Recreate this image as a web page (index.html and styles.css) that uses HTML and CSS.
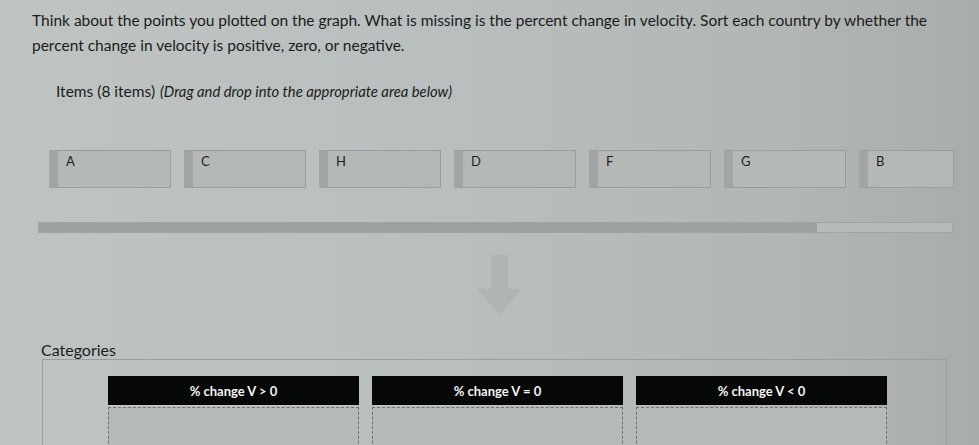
FILE: index.html
```html
<!DOCTYPE html>
<html>
<head>
<meta charset="utf-8">
<link rel="stylesheet" href="styles.css">
</head>
<body>
<div class="page">
  <p class="prompt">Think about the points you plotted on the graph. What is missing is the percent change in velocity. Sort each country by whether the percent change in velocity is positive, zero, or negative.</p>
  <div class="items-head"><span class="items-title">Items (8 items)</span> <span class="items-hint">(Drag and drop into the appropriate area below)</span></div>
  <div class="cards">
    <div class="card"><span>A</span></div>
    <div class="card"><span>C</span></div>
    <div class="card"><span>H</span></div>
    <div class="card"><span>D</span></div>
    <div class="card"><span>F</span></div>
    <div class="card"><span>G</span></div>
    <div class="card last"><span>B</span></div>
  </div>
  <div class="track"><div class="thumb"></div></div>
  <div class="arrow-wrap">
    <svg class="arrow" width="48" height="62" viewBox="0 0 48 62">
      <rect x="15" y="0" width="17" height="36" fill="#afb5b4"/>
      <polygon points="1,34 46,34 23.5,60" fill="#afb5b4"/>
    </svg>
  </div>
  <div class="cat-label">Categories</div>
  <div class="cat-box">
    <div class="cat-col">
      <div class="cat-head">% change V &gt; 0</div>
      <div class="cat-drop"></div>
    </div>
    <div class="cat-col">
      <div class="cat-head">% change V = 0</div>
      <div class="cat-drop"></div>
    </div>
    <div class="cat-col">
      <div class="cat-head">% change V &lt; 0</div>
      <div class="cat-drop"></div>
    </div>
  </div>
</div>
</body>
</html>
```

FILE: styles.css
```css
html, body {
  margin: 0;
  padding: 0;
  height: 100%;
  overflow: hidden;
}
body {
  background: linear-gradient(90deg, #bfc4c3 0%, #b9bfbe 45%, #b2b7b5 80%, #a8acaa 100%);
  font-family: Lato, "Open Sans", sans-serif;
  color: #1a1c1b;
}
.page {
  padding: 8px 0 0 0;
}
.prompt {
  margin: 0 0 0 32px;
  width: 940px;
  font-size: 15.5px;
  line-height: 25px;
}
.items-head {
  margin: 23px 0 0 56px;
  font-size: 15.5px;
  line-height: 20px;
}
.items-hint {
  font-style: italic;
  font-size: 14.8px;
  margin-left: 1px;
}
.cards {
  display: flex;
  gap: 13px;
  margin: 49px 0 0 49px;
}
.card {
  flex: 0 0 auto;
  width: 112px;
  height: 36px;
  background: #b4b9b8;
  border: 1px solid #989d9c;
  border-left: 9px solid #a1a6a5;
  font-size: 13px;
  color: #1d1f1e;
}
.card span {
  display: block;
  padding: 2px 0 0 8px;
}
.card.last {
  width: 85px;
}
.track {
  margin: 34px 0 0 38px;
  width: 913px;
  height: 9px;
  border: 1px solid #9fa4a3;
  background: #b7bcbb;
}
.thumb {
  width: 778px;
  height: 100%;
  background: #9da2a1;
}
.arrow-wrap {
  display: flex;
  justify-content: center;
  margin: 22px 0 0 20px;
}
.arrow {
  display: block;
}
.cat-label {
  margin: 24px 0 0 41px;
  font-size: 16px;
  line-height: 18px;
}
.cat-box {
  margin: 0 0 0 42px;
  width: 905px;
  height: 100px;
  border: 1px solid #9a9f9e;
  display: flex;
  gap: 13px;
  padding: 16px 0 0 65px;
  box-sizing: border-box;
}
.cat-col {
  width: 251px;
  display: flex;
  flex-direction: column;
}
.cat-head {
  height: 29px;
  background: #060707;
  color: #f2f2f2;
  font-size: 13px;
  font-weight: bold;
  display: flex;
  align-items: center;
  justify-content: center;
}
.cat-drop {
  margin-top: 2px;
  flex: 1;
  border: 1px dashed #6d7170;
  border-bottom: none;
  background: #b6bbba;
}
```
